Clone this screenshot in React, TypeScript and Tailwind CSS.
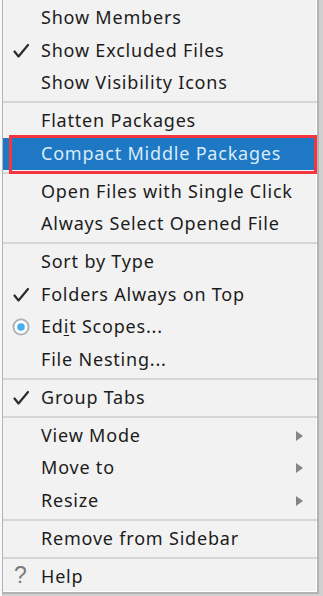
import type { ReactNode } from 'react';

type Mark = 'check' | 'radio' | 'help' | null;

type Item = {
  label: ReactNode;
  mark?: Mark;
  submenu?: boolean;
  selected?: boolean;
};

const groups: Item[][] = [
  [
    { label: 'Show Members' },
    { label: 'Show Excluded Files', mark: 'check' },
    { label: 'Show Visibility Icons' },
  ],
  [{ label: 'Flatten Packages' }, { label: 'Compact Middle Packages', selected: true }],
  [{ label: 'Open Files with Single Click' }, { label: 'Always Select Opened File' }],
  [
    { label: 'Sort by Type' },
    { label: 'Folders Always on Top', mark: 'check' },
    {
      label: (
        <>
          Ed<span className="underline underline-offset-2">i</span>t Scopes...
        </>
      ),
      mark: 'radio',
    },
    { label: 'File Nesting...' },
  ],
  [{ label: 'Group Tabs', mark: 'check' }],
  [
    { label: 'View Mode', submenu: true },
    { label: 'Move to', submenu: true },
    { label: 'Resize', submenu: true },
  ],
  [{ label: 'Remove from Sidebar' }],
  [{ label: 'Help', mark: 'help' }],
];

function MarkIcon({ mark }: { mark: Mark }) {
  if (mark === 'check') {
    return (
      <svg width="18" height="16" viewBox="0 0 18 16" className="text-[#2b2b2b]">
        <path d="M2.5 8.5 L6.5 13.5 L16 2" fill="none" stroke="currentColor" strokeWidth="2.2" strokeLinecap="round" strokeLinejoin="round" />
      </svg>
    );
  }
  if (mark === 'radio') {
    return (
      <svg width="18" height="18" viewBox="0 0 18 18">
        <circle cx="9" cy="9" r="7.6" fill="#fbfbfb" stroke="#a9b0b6" strokeWidth="1.8" />
        <circle cx="9" cy="9" r="3.8" fill="#46aef0" />
      </svg>
    );
  }
  if (mark === 'help') {
    return <span className="-mt-[2px] font-['Liberation_Sans',sans-serif] text-[23px] leading-none tracking-normal text-[#7a7a7a]">?</span>;
  }
  return null;
}

function MenuRow({ item }: { item: Item }) {
  return (
    <div
      className={`relative flex h-[32.5px] items-center pl-[38px] pr-[14px] ${
        item.selected ? 'bg-[#1f78c4] text-[#d9ecfb]' : 'text-[#1c1c1c]'
      }`}
    >
      <span className="absolute left-0 top-0 flex h-full w-[35px] items-center justify-center">
        <MarkIcon mark={item.mark ?? null} />
      </span>
      <span className="flex-1 whitespace-nowrap pb-[1px]">{item.label}</span>
      {item.submenu ? (
        <svg width="7" height="10" viewBox="0 0 7 10" className="text-[#858585]">
          <path d="M0 0 L7 5 L0 10 Z" fill="currentColor" />
        </svg>
      ) : null}
      {item.selected ? (
        <span className="pointer-events-none absolute -bottom-[3.5px] -top-[3px] left-[6px] right-0 border-[3px] border-[#f2353f]" />
      ) : null}
    </div>
  );
}

export default function App() {
  return (
    <div className="flex h-[596px] w-[323px] bg-[#cfcfcf] font-['Noto_Sans',sans-serif] text-[18px] tracking-[0.8px]">
      <div className="w-[2px] bg-[#f8f8f8]" />
      <div className="flex h-[594px] w-[317px] flex-col border-b-2 border-l border-r-2 border-[#b3b3b3] bg-[#f2f2f2] pt-[2px] shadow-[inset_-1px_-1px_0_#ffffff]">
        {groups.map((group, gi) => (
          <div key={gi} className="flex flex-col">
            {gi > 0 ? <div className="mb-[2px] mt-[1.5px] h-[2px] bg-[#d6d6d6]" /> : null}
            {group.map((item, ii) => (
              <MenuRow key={ii} item={item} />
            ))}
          </div>
        ))}
      </div>
    </div>
  );
}
